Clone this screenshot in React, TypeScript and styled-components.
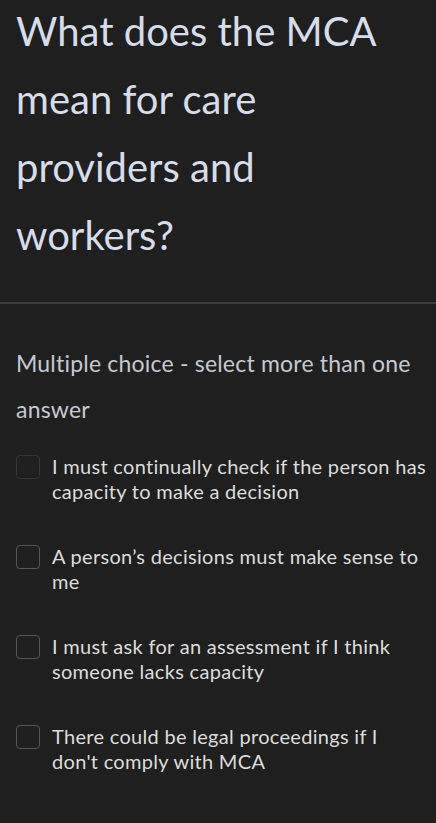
import React from "react";
import styled, { createGlobalStyle } from "styled-components";

const Global = createGlobalStyle`
  html, body {
    margin: 0;
    padding: 0;
    background: #1f1f1f;
  }
  body {
    font-family: "Lato", "Noto Sans", sans-serif;
  }
`;

const Page = styled.div`
  background: #1f1f1f;
  min-height: 823px;
  width: 436px;
  overflow: hidden;
`;

const Header = styled.header`
  padding: 0 16px 33px 16px;
`;

const Title = styled.h1`
  margin: -3px 0 0 0;
  font-size: 40px;
  font-weight: 400;
  line-height: 68px;
  color: #d6dcea;
`;

const Divider = styled.hr`
  margin: 0;
  border: none;
  height: 2px;
  background: #3d3d3d;
`;

const Body = styled.section`
  padding: 36px 8px 0 16px;
`;

const Instruction = styled.p`
  margin: 0;
  font-size: 23px;
  line-height: 46px;
  letter-spacing: 0.2px;
  color: #c5c9d2;
`;

const OptionList = styled.ul`
  list-style: none;
  margin: 22px 0 0 0;
  padding: 0;
  display: flex;
  flex-direction: column;
  gap: 40px;
`;

const Option = styled.li`
  display: flex;
  align-items: flex-start;
  gap: 12px;
`;

const Box = styled.span<{ $faint?: boolean }>`
  flex: none;
  width: 22px;
  height: 22px;
  margin-top: 1px;
  border-radius: 4px;
  border: 1px solid ${(p) => (p.$faint ? "#373737" : "#555555")};
`;

const Label = styled.span`
  font-size: 20px;
  line-height: 25px;
  letter-spacing: 0.3px;
  color: #dcdcdc;
`;

const options = [
  "I must continually check if the person has capacity to make a decision",
  "A person\u2019s decisions must make sense to me",
  "I must ask for an assessment if I think someone lacks capacity",
  "There could be legal proceedings if I don't comply with MCA",
];

export default function App() {
  return (
    <Page>
      <Global />
      <Header>
        <Title>What does the MCA mean for care providers and workers?</Title>
      </Header>
      <Divider />
      <Body>
        <Instruction>Multiple choice - select more than one answer</Instruction>
        <OptionList>
          {options.map((o, i) => (
            <Option key={i}>
              <Box $faint={i === 0} />
              <Label>{o}</Label>
            </Option>
          ))}
        </OptionList>
      </Body>
    </Page>
  );
}
